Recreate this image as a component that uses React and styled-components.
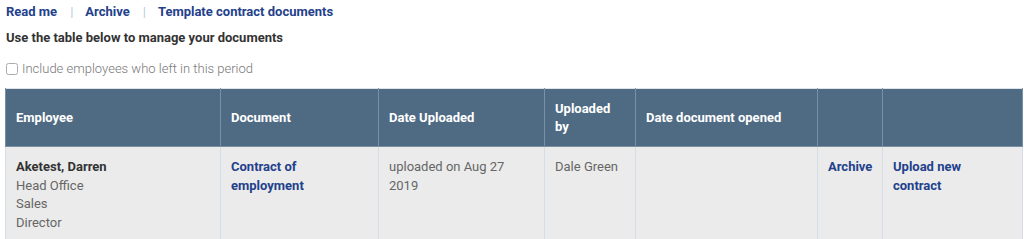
import React from 'react';
import styled, { createGlobalStyle } from 'styled-components';

const GlobalStyle = createGlobalStyle`
    body {
        margin: 0;
        background: #ffffff;
        font-family: Roboto, 'Liberation Sans', Arial, sans-serif;
        font-size: 13px;
        color: #333333;
    }
`

const Page = styled.div`
    padding: 2px 2px 0 5px;
`

const LinkBar = styled.div`
    display: flex;
    align-items: center;
    height: 18px;
    margin-left: 1px;
`

const NavLink = styled.a`
    color: #23418b;
    font-weight: 700;
    font-size: 13px;
    text-decoration: none;
    cursor: pointer;
`

const Separator = styled.span`
    color: #b9c9db;
    margin: 0 12px 0 13px;
    font-size: 13px;
`

const Intro = styled.p`
    margin: 9px 0 0 1px;
    font-weight: 700;
    font-size: 13px;
    line-height: 18px;
    color: #333333;
`

const CheckRow = styled.label`
    display: flex;
    align-items: center;
    margin: 13px 0 0 1px;
    color: #777777;
    font-size: 13px;
    font-weight: 300;
    line-height: 18px;
`

const Box = styled.input`
    width: 12px;
    height: 12px;
    margin: 0 4px 0 0;
    opacity: 0.6;
`

const Table = styled.table`
    margin-top: 10px;
    width: 1017px;
    border-collapse: collapse;
    border: 1px solid #dde3ea;
    table-layout: fixed;
`

const Th = styled.th`
    background: #4f6b84;
    color: #ffffff;
    font-weight: 700;
    font-size: 13px;
    line-height: 18px;
    text-align: left;
    vertical-align: middle;
    height: 57px;
    padding: 0 10px;
    border: 1px solid #7990a6;
    border-top: none;
`

const Td = styled.td`
    background: #ebebeb;
    vertical-align: top;
    padding: 11px 10px 8px;
    font-size: 13px;
    line-height: 18.5px;
    color: #666666;
    border: 1px solid #d6dee8;
    height: 70px;
`

const Name = styled.div`
    color: #333333;
    font-weight: 700;
`

const CellLink = styled.a`
    color: #23418b;
    font-weight: 700;
    text-decoration: none;
    cursor: pointer;
`

const columns = [
    { title: 'Employee', width: 215 },
    { title: 'Document', width: 158 },
    { title: 'Date Uploaded', width: 166 },
    { title: 'Uploaded by', width: 91 },
    { title: 'Date document opened', width: 182 },
    { title: '', width: 65 },
    { title: '', width: 140 },
];

export default function App() {
    return (
        <Page>
            <GlobalStyle />
            <LinkBar>
                <NavLink>Read me</NavLink>
                <Separator>|</Separator>
                <NavLink>Archive</NavLink>
                <Separator>|</Separator>
                <NavLink>Template contract documents</NavLink>
            </LinkBar>
            <Intro>Use the table below to manage your documents</Intro>
            <CheckRow>
                <Box type="checkbox" />
                Include employees who left in this period
            </CheckRow>
            <Table>
                <colgroup>
                    {columns.map((c, i) => <col key={i} style={{ width: c.width }} />)}
                </colgroup>
                <thead>
                    <tr>
                        {columns.map((c, i) => <Th key={i}>{c.title}</Th>)}
                    </tr>
                </thead>
                <tbody>
                    <tr>
                        <Td>
                            <Name>Aketest, Darren</Name>
                            <div>Head Office</div>
                            <div>Sales</div>
                            <div>Director</div>
                        </Td>
                        <Td><CellLink>Contract of employment</CellLink></Td>
                        <Td>uploaded on Aug 27 2019</Td>
                        <Td>Dale Green</Td>
                        <Td></Td>
                        <Td><CellLink>Archive</CellLink></Td>
                        <Td><CellLink>Upload new contract</CellLink></Td>
                    </tr>
                    <tr>
                        <Td />
                        <Td />
                        <Td />
                        <Td />
                        <Td />
                        <Td />
                        <Td />
                    </tr>
                </tbody>
            </Table>
        </Page>
    );
}
